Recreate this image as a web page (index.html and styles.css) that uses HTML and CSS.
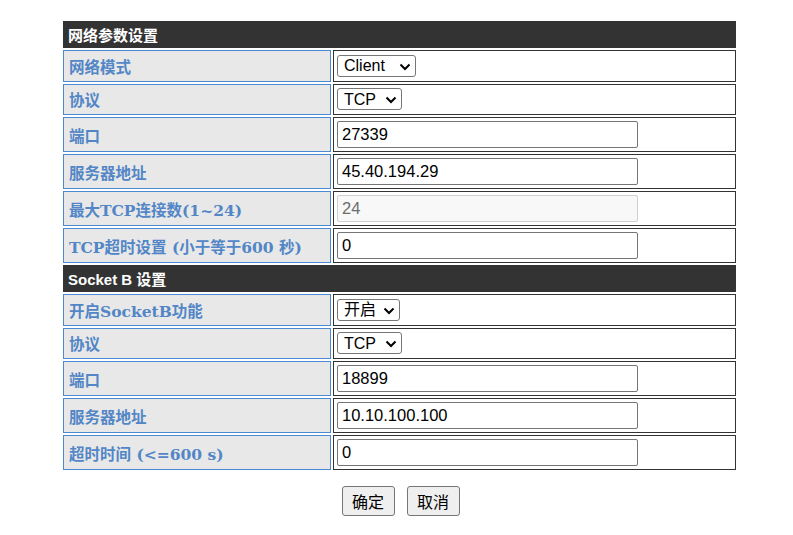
FILE: index.html
```html
<!DOCTYPE html>
<html>
<head>
<meta charset="utf-8">
<link rel="stylesheet" href="styles.css">
</head>
<body>
<div class="page">
  <table class="cfg">
    <colgroup><col class="c1"><col class="c2"></colgroup>
    <tr class="hd"><th colspan="2">网络参数设置</th></tr>
    <tr class="rs"><td class="lb">网络模式</td><td class="val"><span class="sel w-client"><select><option>Client</option></select><svg viewBox="0 0 12 8" class="chev"><path d="M1.5 1.5 L6 6 L10.5 1.5"/></svg></span></td></tr>
    <tr class="rs"><td class="lb">协议</td><td class="val"><span class="sel w-tcp"><select><option>TCP</option></select><svg viewBox="0 0 12 8" class="chev"><path d="M1.5 1.5 L6 6 L10.5 1.5"/></svg></span></td></tr>
    <tr class="ri"><td class="lb">端口</td><td class="val"><input class="txt" type="text" value="27339"></td></tr>
    <tr class="ri"><td class="lb">服务器地址</td><td class="val"><input class="txt" type="text" value="45.40.194.29"></td></tr>
    <tr class="ri"><td class="lb">最大TCP连接数(1~24)</td><td class="val"><input class="txt" type="text" value="24" disabled></td></tr>
    <tr class="ri"><td class="lb">TCP超时设置 (小于等于600 秒)</td><td class="val"><input class="txt" type="text" value="0"></td></tr>
    <tr class="hd"><th colspan="2">Socket B 设置</th></tr>
    <tr class="rs"><td class="lb">开启SocketB功能</td><td class="val"><span class="sel w-on"><select><option>开启</option></select><svg viewBox="0 0 12 8" class="chev"><path d="M1.5 1.5 L6 6 L10.5 1.5"/></svg></span></td></tr>
    <tr class="rs"><td class="lb">协议</td><td class="val"><span class="sel w-tcp"><select><option>TCP</option></select><svg viewBox="0 0 12 8" class="chev"><path d="M1.5 1.5 L6 6 L10.5 1.5"/></svg></span></td></tr>
    <tr class="ri"><td class="lb">端口</td><td class="val"><input class="txt" type="text" value="18899"></td></tr>
    <tr class="ri"><td class="lb">服务器地址</td><td class="val"><input class="txt" type="text" value="10.10.100.100"></td></tr>
    <tr class="ri"><td class="lb">超时时间 (&lt;=600 s)</td><td class="val"><input class="txt" type="text" value="0"></td></tr>
  </table>
  <div class="btns">
    <button class="btn">确定</button>
    <button class="btn">取消</button>
  </div>
</div>
</body>
</html>
```
FILE: styles.css
```css
html, body {
  margin: 0;
  padding: 0;
  background: #ffffff;
}
.page {
  padding: 19px 0 0 61px;
  width: 677px;
}
.cfg {
  border-collapse: separate;
  border-spacing: 2px;
  table-layout: fixed;
  width: 677px;
}
.c1 { width: 268px; }
.c2 { width: 403px; }
.hd th {
  background: #333333;
  color: #ffffff;
  text-align: left;
  font: bold 15px "Liberation Sans", "Noto Sans CJK SC", sans-serif;
  height: 27px;
  padding: 0 0 0 5px;
  box-sizing: border-box;
}
.rs td { height: 31.5px; }
.ri td { height: 35px; }
td {
  box-sizing: border-box;
  vertical-align: middle;
}
.lb {
  background: #e8e8e8;
  border: 1px solid #4a8ad4;
  color: #5286c6;
  font: bold 15.5px "DejaVu Serif", "Noto Sans CJK SC", serif;
  padding: 0 0 0 5px;
  white-space: nowrap;
}
.val {
  background: #ffffff;
  border: 1px solid #333333;
  padding: 0 0 0 3px;
  line-height: 0;
}
.sel {
  position: relative;
  display: inline-block;
  height: 22px;
}
.sel select {
  appearance: none;
  -webkit-appearance: none;
  box-sizing: border-box;
  height: 22px;
  border: 1px solid #767676;
  border-radius: 3px;
  background: #ffffff;
  color: #000000;
  font: 16px "Liberation Sans", "Noto Sans CJK SC", sans-serif;
  padding: 0 0 0 6px;
  margin: 0;
  outline: none;
}
.w-client select { width: 79px; }
.w-tcp select { width: 65px; }
.w-on select { width: 63px; }
.chev {
  position: absolute;
  right: 5px;
  top: 8px;
  width: 12px;
  height: 8px;
  fill: none;
  stroke: #000000;
  stroke-width: 2;
  pointer-events: none;
}
.txt {
  box-sizing: border-box;
  width: 301px;
  height: 27px;
  margin: 0;
  border: 1px solid #767676;
  border-radius: 2px;
  padding: 0 4px;
  font: 16.5px "Liberation Sans", sans-serif;
  color: #000000;
  background: #ffffff;
  outline: none;
}
.txt:disabled {
  background: #f8f8f8;
  border-color: #d0d0d0;
  color: #6d6d6d;
}
.btns {
  display: flex;
  justify-content: center;
  gap: 12px;
  margin-top: 14px;
  padding-left: 2px;
}
.btn {
  box-sizing: border-box;
  width: 53px;
  height: 30px;
  background: #efefef;
  border: 1px solid #767676;
  border-radius: 3px;
  font: 16px "Noto Sans CJK SC", sans-serif;
  color: #000000;
  padding: 0;
}
```
